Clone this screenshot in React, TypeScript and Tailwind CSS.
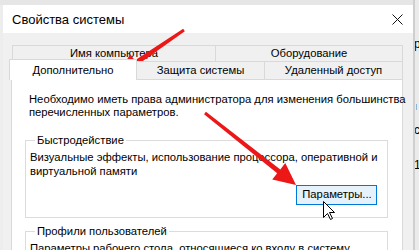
import React from 'react';

type Pt = [number, number];

// red callout arrow as one polygon: tapered shaft + triangular head
const arrowPoints = (tail: Pt, tip: Pt, w0: number, w1: number, headL: number, headW: number) => {
  const dx = tip[0] - tail[0];
  const dy = tip[1] - tail[1];
  const len = Math.hypot(dx, dy);
  const ux = dx / len;
  const uy = dy / len;
  const nx = -uy;
  const ny = ux;
  const neck: Pt = [tip[0] - ux * headL, tip[1] - uy * headL];
  const pts: Pt[] = [
    [tail[0] + (nx * w0) / 2, tail[1] + (ny * w0) / 2],
    [neck[0] + (nx * w1) / 2, neck[1] + (ny * w1) / 2],
    [neck[0] + (nx * headW) / 2, neck[1] + (ny * headW) / 2],
    tip,
    [neck[0] - (nx * headW) / 2, neck[1] - (ny * headW) / 2],
    [neck[0] - (nx * w1) / 2, neck[1] - (ny * w1) / 2],
    [tail[0] - (nx * w0) / 2, tail[1] - (ny * w0) / 2],
  ];
  return pts.map((p) => p.join(',')).join(' ');
};

const Overlay: React.FC = () => (
  <svg className="pointer-events-none absolute inset-0" width="419" height="250" viewBox="0 0 419 250">
    <polygon points={arrowPoints([184, 30], [118, 75], 3, 5, 22, 21)} fill="#ec1717" />
    <polygon points={arrowPoints([205, 113], [296, 185], 3, 5, 22, 21)} fill="#ec1717" />
    {/* mouse pointer */}
    <path
      d="M323.5 201.5 L323.5 217.5 L327.5 213.5 L330.5 219.5 L332.5 218.5 L329.5 212.5 L334.5 212.5 Z"
      fill="#fff"
      stroke="#000"
      strokeWidth="1"
    />
  </svg>
);

const Tab: React.FC<{ w: string; children: React.ReactNode; className?: string }> = ({ w, children, className }) => (
  <div className={`${w} h-full shrink-0 flex items-center justify-center border border-[#d9d9d9] bg-[#f0f0f0] ${className ?? ''}`}>
    {children}
  </div>
);

const Window: React.FC = () => (
  <div className="w-[410px] shrink-0 flex flex-col bg-[#f0f0f0]">
    {/* title bar */}
    <div className="h-[28px] shrink-0 bg-white flex items-center justify-between pl-[9px] pr-[10px]">
      <span className="text-[13px] leading-none">Свойства системы</span>
      <svg width="11" height="11" viewBox="0 0 11 11">
        <path d="M0.5 0.5 L10.5 10.5 M10.5 0.5 L0.5 10.5" stroke="#111" strokeWidth="1" />
      </svg>
    </div>

    <div className="flex-1 flex flex-col pl-[8px] pr-[10px] pt-[12px]">
      {/* back row of tabs */}
      <div className="flex h-[17px] ml-px">
        <Tab w="w-[204px]">Имя компьютера</Tab>
        <Tab w="w-[188px]" className="-ml-px">Оборудование</Tab>
      </div>
      {/* front row of tabs */}
      <div className="flex items-end h-[19px] -mt-px -mb-px -ml-[2px] relative z-10">
        <div className="w-[128px] h-[21px] shrink-0 flex items-center justify-center bg-white border border-b-0 border-[#d9d9d9]">
          Дополнительно
        </div>
        <Tab w="w-[129px]" className="-ml-px">Защита системы</Tab>
        <Tab w="w-[139px]" className="-ml-px">Удаленный доступ</Tab>
      </div>

      {/* tab page */}
      <div className="flex-1 bg-white border border-[#d9d9d9] pl-[13px] pr-[14px] pt-[13px]">
        <p className="pl-[4px] leading-[13px] whitespace-nowrap">
          Необходимо иметь права администратора для изменения большинства
          <br />
          перечисленных параметров.
        </p>

        <fieldset className="mt-[15px] border border-[#dcdcdc] pl-[4px] pr-[10px] pb-[12px]">
          <legend className="ml-[5px] px-[2px] leading-[13px]">Быстродействие</legend>
          <p className="mt-[3px] leading-[14px] whitespace-nowrap">
            Визуальные эффекты, использование процессора, оперативной и
            <br />
            виртуальной памяти
          </p>
          <div className="flex justify-end mt-[7px]">
            <button className="w-[81px] h-[20px] border border-[#0078d7] bg-[#e5f1fb] leading-none">
              Параметры...
            </button>
          </div>
        </fieldset>

        <fieldset className="mt-[7px] border border-[#dcdcdc] pl-[4px] pr-[10px] pb-[10px]">
          <legend className="ml-[5px] px-[2px] leading-[13px]">Профили пользователей</legend>
          <p className="mt-[3px] leading-[14px] whitespace-nowrap">
            Параметры рабочего стола, относящиеся ко входу в систему
          </p>
        </fieldset>
      </div>
    </div>
  </div>
);

// sliver of the window lying behind, on the right
const BackStrip: React.FC = () => (
  <div className="w-[6px] shrink-0 overflow-hidden bg-[#ebebeb] border-l-[2px] border-[#cfcfcf] flex flex-col text-[12px] leading-[12px] -mt-[5px]">
    <span className="mt-[38px] -ml-[1px]">р</span>
    <span className="mt-[54px] ml-[1px] w-px h-[6px] bg-[#8fb4d9]" />
    <span className="mt-[14px] -ml-[1px]">с</span>
    <span className="mt-[23px] -ml-[1px]">1</span>
  </div>
);

export default function App() {
  return (
    <div className="relative w-[419px] h-[250px] overflow-hidden bg-[#e6e6e6] font-['Liberation_Sans',Arial,sans-serif] text-[11.25px] text-black">
      <div className="flex h-full pt-[5px]">
        <div className="w-[3px] shrink-0 bg-[#ededed]" />
        <Window />
        <BackStrip />
      </div>
      <Overlay />
    </div>
  );
}
